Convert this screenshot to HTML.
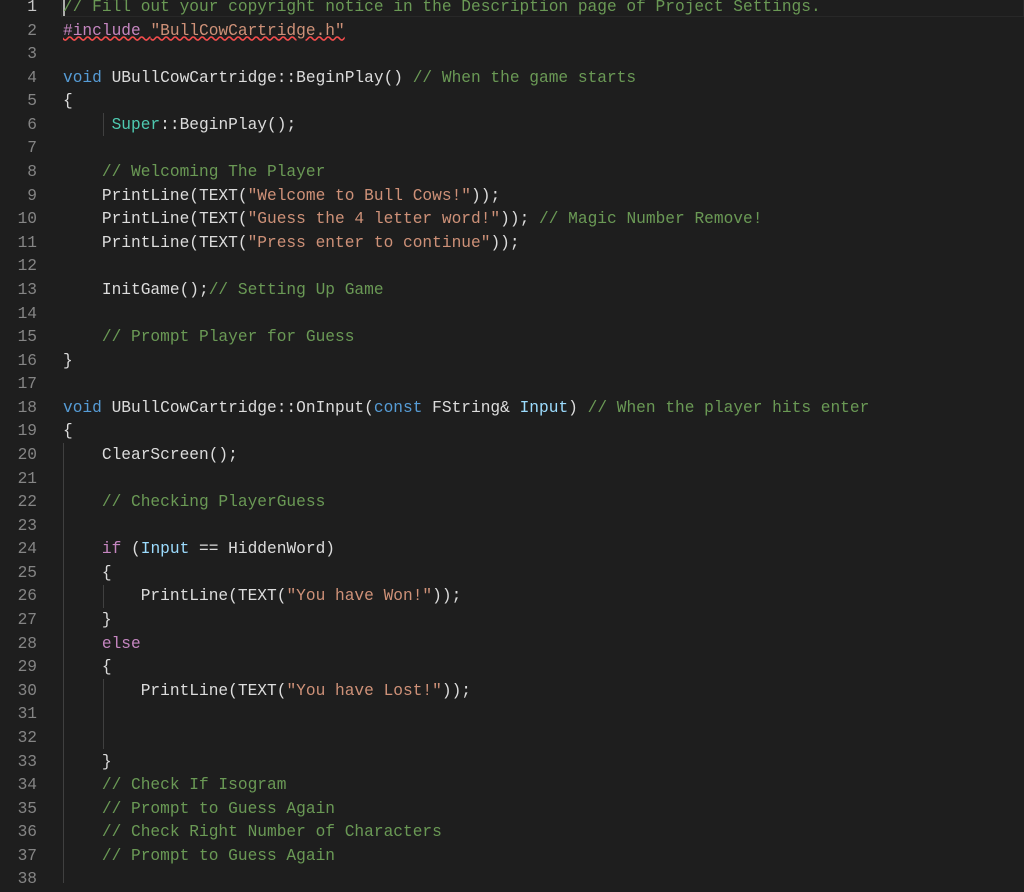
<!DOCTYPE html>
<html><head><meta charset="utf-8"><style>
html,body{margin:0;padding:0;background:#1e1e1e;width:1024px;height:879px;overflow:hidden}
#wrap{position:absolute;left:0;top:-4px;width:1024px}
.l{height:23.58px;line-height:23.58px;white-space:pre;font-family:"Liberation Mono",monospace;font-size:16.2px;color:#dcdcdc;position:relative}
.n{position:absolute;left:0;width:37px;text-align:right;color:#858585}
.c{position:absolute;left:63px}
.cur .n{color:#c6c6c6}
.k{color:#569cd6}.s{color:#ce9178}.m{color:#6a9955}.p{color:#c586c0}.t{color:#4ec9b0}.v{color:#9cdcfe}.f{color:#dcdcaa}
.g{position:absolute;width:1px;background:#404040}
</style></head><body>
<div style="position:absolute;left:61px;top:-5px;width:963px;height:22px;border:1px solid #282828;box-sizing:border-box"></div>
<div class="g" style="left:103px;top:113px;height:23px"></div>
<div class="g" style="left:63px;top:443px;height:440px"></div>
<div class="g" style="left:103px;top:585px;height:23px"></div>
<div class="g" style="left:103px;top:679px;height:70px"></div>
<div style="position:absolute;left:63px;top:-2px;width:2px;height:18px;background:#aeafad"></div>
<div id="wrap">
<div class="l cur"><span class="n">1</span><span class="c m">// Fill out your copyright notice in the Description page of Project Settings.</span></div>
<div class="l"><span class="n">2</span><span class="c"><span class="p" style="text-decoration:underline wavy #f14c4c">#include </span><span class="s" style="text-decoration:underline wavy #f14c4c">"BullCowCartridge.h"</span></span></div>
<div class="l"><span class="n">3</span></div>
<div class="l"><span class="n">4</span><span class="c"><span class="k">void</span> UBullCowCartridge::BeginPlay() <span class="m">// When the game starts</span></span></div>
<div class="l"><span class="n">5</span><span class="c">{</span></div>
<div class="l"><span class="n">6</span><span class="c">     <span class="t">Super</span>::BeginPlay();</span></div>
<div class="l"><span class="n">7</span></div>
<div class="l"><span class="n">8</span><span class="c">    <span class="m">// Welcoming The Player</span></span></div>
<div class="l"><span class="n">9</span><span class="c">    PrintLine(TEXT(<span class="s">"Welcome to Bull Cows!"</span>));</span></div>
<div class="l"><span class="n">10</span><span class="c">    PrintLine(TEXT(<span class="s">"Guess the 4 letter word!"</span>)); <span class="m">// Magic Number Remove!</span></span></div>
<div class="l"><span class="n">11</span><span class="c">    PrintLine(TEXT(<span class="s">"Press enter to continue"</span>));</span></div>
<div class="l"><span class="n">12</span></div>
<div class="l"><span class="n">13</span><span class="c">    InitGame();<span class="m">// Setting Up Game</span></span></div>
<div class="l"><span class="n">14</span></div>
<div class="l"><span class="n">15</span><span class="c">    <span class="m">// Prompt Player for Guess</span></span></div>
<div class="l"><span class="n">16</span><span class="c">}</span></div>
<div class="l"><span class="n">17</span></div>
<div class="l"><span class="n">18</span><span class="c"><span class="k">void</span> UBullCowCartridge::OnInput(<span class="k">const</span> FString&amp; <span class="v">Input</span>) <span class="m">// When the player hits enter</span></span></div>
<div class="l"><span class="n">19</span><span class="c">{</span></div>
<div class="l"><span class="n">20</span><span class="c">    ClearScreen();</span></div>
<div class="l"><span class="n">21</span></div>
<div class="l"><span class="n">22</span><span class="c">    <span class="m">// Checking PlayerGuess</span></span></div>
<div class="l"><span class="n">23</span></div>
<div class="l"><span class="n">24</span><span class="c">    <span class="p">if</span> (<span class="v">Input</span> == HiddenWord)</span></div>
<div class="l"><span class="n">25</span><span class="c">    {</span></div>
<div class="l"><span class="n">26</span><span class="c">        PrintLine(TEXT(<span class="s">"You have Won!"</span>));</span></div>
<div class="l"><span class="n">27</span><span class="c">    }</span></div>
<div class="l"><span class="n">28</span><span class="c">    <span class="p">else</span></span></div>
<div class="l"><span class="n">29</span><span class="c">    {</span></div>
<div class="l"><span class="n">30</span><span class="c">        PrintLine(TEXT(<span class="s">"You have Lost!"</span>));</span></div>
<div class="l"><span class="n">31</span></div>
<div class="l"><span class="n">32</span></div>
<div class="l"><span class="n">33</span><span class="c">    }</span></div>
<div class="l"><span class="n">34</span><span class="c">    <span class="m">// Check If Isogram</span></span></div>
<div class="l"><span class="n">35</span><span class="c">    <span class="m">// Prompt to Guess Again</span></span></div>
<div class="l"><span class="n">36</span><span class="c">    <span class="m">// Check Right Number of Characters</span></span></div>
<div class="l"><span class="n">37</span><span class="c">    <span class="m">// Prompt to Guess Again</span></span></div>
<div class="l"><span class="n">38</span></div>
</div>
</body></html>
